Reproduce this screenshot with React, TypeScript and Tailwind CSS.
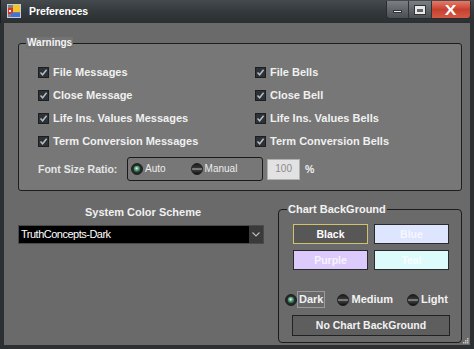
import React from "react";

const Check = () => (
  <svg width="11" height="11" viewBox="0 0 11 11" className="shrink-0">
    <rect x="0.5" y="0.5" width="10" height="10" fill="#2e3236" stroke="#1c1e20" />
    <path d="M2.5 5.6 L4.6 7.8 L8.6 2.8" fill="none" stroke="#b4bec6" strokeWidth="1.5" />
  </svg>
);

const Radio = ({ on }: { on?: boolean }) => (
  <svg width="12" height="12" viewBox="0 0 12 12" className="shrink-0">
    <defs>
      <linearGradient id="rOff" x1="0" y1="0" x2="0" y2="1">
        <stop offset="0" stopColor="#1c1c1c" />
        <stop offset="0.38" stopColor="#333" />
        <stop offset="0.5" stopColor="#a0a0a0" />
        <stop offset="0.62" stopColor="#3a3a3a" />
        <stop offset="1" stopColor="#111" />
      </linearGradient>
      <radialGradient id="rOn" cx="0.45" cy="0.4" r="0.6">
        <stop offset="0" stopColor="#e8fff4" />
        <stop offset="0.35" stopColor="#6fb896" />
        <stop offset="1" stopColor="#1d4a38" />
      </radialGradient>
    </defs>
    <circle cx="6" cy="6" r="5.5" fill={on ? "#262a28" : "url(#rOff)"} stroke="#151515" strokeWidth="0.8" />
    {on && <circle cx="6" cy="6" r="3.3" fill="url(#rOn)" />}
  </svg>
);

const CheckItem = ({ label }: { label: string }) => (
  <div className="flex items-center gap-[4px]">
    <Check />
    <span className="text-[11px] font-bold text-[#f0f0f0] leading-none">{label}</span>
  </div>
);

export default function App() {
  return (
    <div className="w-[474px] h-[349px] flex flex-col bg-[#6a6a6a] font-['Liberation_Sans',Arial,sans-serif] overflow-hidden">
      {/* Title bar */}
      <div className="h-[23px] shrink-0 flex items-start bg-gradient-to-b from-[#454a4e] via-[#34393c] to-[#2b2f32] border-l border-[#1a1d1f]">
        <svg width="14" height="14" viewBox="0 0 14 14" className="ml-[6px] mt-[4px] shrink-0">
          <rect x="0" y="0" width="14" height="14" fill="#c9ccd2" />
          <rect x="1" y="1" width="12" height="12" fill="#7d8088" />
          <rect x="6" y="1" width="7" height="7" fill="#f2c52a" />
          <rect x="1" y="4" width="5" height="6" fill="#d8332a" />
          <rect x="4" y="9" width="9" height="4" fill="#3f74d8" />
          <rect x="2" y="6" width="2" height="2" fill="#f5f5f5" />
        </svg>
        <span className="ml-[8px] mt-[5px] text-[10.5px] font-bold text-white leading-[12px] tracking-[-0.1px]">Preferences</span>
        <div className="ml-auto mr-[3px] mt-[1px] flex h-[18px] rounded-b-[4px] overflow-hidden border border-[#2a2d30] border-t-0">
          <div className="w-[22px] h-full flex items-center justify-center bg-gradient-to-b from-[#7a7f83] to-[#4a4f53] border-r border-[#2f3336]">
            <div className="w-[9px] h-[3px] bg-[#e8e8e8] border border-[#333] mt-[4px]" />
          </div>
          <div className="w-[23px] h-full flex items-center justify-center bg-gradient-to-b from-[#7a7f83] to-[#4a4f53] border-r border-[#2f3336]">
            <div className="w-[10px] h-[8px] border-[2px] border-t-[3px] border-[#e8e8e8] outline outline-1 outline-[#333]" />
          </div>
          <div className="w-[38px] h-full flex items-center justify-center bg-gradient-to-b from-[#e57a68] via-[#c6402f] to-[#d25a45]">
            <span className="text-[14px] font-bold text-white leading-none scale-x-125">X</span>
          </div>
        </div>
      </div>

      {/* Body */}
      <div className="relative flex-1 border-l-[4px] border-r-[4px] border-b-[4px] border-[#2c3033] pl-[14px] pt-[20px]">
        {/* Warnings group */}
        <div className="relative w-[444px] h-[148px] border border-[#1e1e1e] rounded-[3px] bg-[#777777] pt-[17px] pl-[19px]">
          <span className="absolute left-[7px] top-[-7px] px-[1px] bg-[#737373] text-[10px] font-bold text-[#f4f4f4] leading-[12px]">Warnings</span>
          <div className="grid grid-cols-[217px_1fr] auto-rows-[23px]">
            <CheckItem label="File Messages" />
            <CheckItem label="File Bells" />
            <CheckItem label="Close Message" />
            <CheckItem label="Close Bell" />
            <CheckItem label="Life Ins. Values Messages" />
            <CheckItem label="Life Ins. Values Bells" />
            <CheckItem label="Term Conversion Messages" />
            <CheckItem label="Term Conversion Bells" />
          </div>
          <div className="mt-[4px] flex items-center h-[24px]">
            <span className="w-[89px] text-[10.5px] font-bold text-[#e6e6e6] leading-none">Font Size Ratio:</span>
            <div className="w-[136px] h-[24px] border border-[#1a1a1a] rounded-[3px] flex items-center pl-[3px]">
              <Radio on />
              <span className="ml-[2px] text-[10px] text-[#ececec] leading-none">Auto</span>
              <div className="ml-[25px]">
                <Radio />
              </div>
              <span className="ml-[2px] text-[10px] text-[#ececec] leading-none">Manual</span>
            </div>
            <div className="ml-[4px] w-[33px] h-[21px] bg-[#e2e2e2] border border-[#b0b0b0] flex items-center justify-end pr-[7px]">
              <span className="text-[10px] text-[#8c8c8c] leading-none">100</span>
            </div>
            <span className="ml-[5px] text-[10.5px] font-bold text-[#f0f0f0] leading-none">%</span>
          </div>
        </div>

        {/* Bottom section */}
        <div className="mt-[14px] flex items-start">
          <div className="w-[246px] flex flex-col">
            <div className="h-[14px] flex items-center justify-center pl-[4px]">
              <span className="text-[11px] font-bold text-[#f0f0f0] leading-none">System Color Scheme</span>
            </div>
            <div className="mt-[6px] h-[19px] bg-black border border-[#4a4a4a] flex items-center">
              <span className="pl-[2px] text-[11px] text-white tracking-[-0.5px] leading-none">TruthConcepts-Dark</span>
              <div className="ml-auto w-[14px] h-full bg-[#3a3a3a] flex items-center justify-center">
                <svg width="8" height="5" viewBox="0 0 8 5">
                  <path d="M0.5 0.5 L4 4 L7.5 0.5" fill="none" stroke="#b8b8b8" strokeWidth="1.2" />
                </svg>
              </div>
            </div>
          </div>

          {/* Chart BackGround group */}
          <div className="relative mt-[4px] ml-[14px] w-[184px] h-[134px] border border-[#1c1c1c] rounded-[4px] pt-[14px]">
            <span className="absolute left-[8px] top-[-8px] px-[1px] bg-[#6a6a6a] text-[11px] font-bold text-[#f2f2f2] leading-[14px]">Chart BackGround</span>
            <div className="ml-[14px] grid grid-cols-[75px_75px] auto-rows-[20px] gap-[6px]">
              <div className="bg-[#575757] border border-[#cfc46a] flex items-center justify-center">
                <span className="text-[10.5px] font-bold text-white leading-none">Black</span>
              </div>
              <div className="bg-[#dde5ff] border border-[#2a2a2a] flex items-center justify-center">
                <span className="text-[10.5px] font-bold text-[#f6f8ff] leading-none">Blue</span>
              </div>
              <div className="bg-[#dccafc] border border-[#2a2a2a] flex items-center justify-center">
                <span className="text-[10.5px] font-bold text-[#f8f2ff] leading-none">Purple</span>
              </div>
              <div className="bg-[#ddfbfb] border border-[#2a2a2a] flex items-center justify-center">
                <span className="text-[10.5px] font-bold text-[#f6ffff] leading-none">Teal</span>
              </div>
            </div>
            <div className="mt-[21px] ml-[6px] h-[17px] flex items-center">
              <Radio on />
              <div className="h-[17px] px-[1px] border border-[#9a9a9a] flex items-center">
                <span className="text-[11px] font-bold text-[#f2f2f2] leading-none">Dark</span>
              </div>
              <div className="ml-[12px]">
                <Radio />
              </div>
              <span className="ml-[2px] text-[11px] font-bold text-[#f2f2f2] leading-none">Medium</span>
              <div className="ml-[14px]">
                <Radio />
              </div>
              <span className="ml-[2px] text-[11px] font-bold text-[#f2f2f2] leading-none">Light</span>
            </div>
            <div className="mt-[7px] ml-[13px] w-[158px] h-[21px] bg-[#5e5e5e] border border-[#222] flex items-center justify-center">
              <span className="text-[10.5px] font-bold text-[#f2f2f2] leading-none">No Chart BackGround</span>
            </div>
          </div>
        </div>

        {/* resize grip */}
        <svg width="7" height="7" viewBox="0 0 7 7" className="absolute right-[1px] bottom-[1px]">
          <rect x="5" y="1" width="1.5" height="1.5" fill="#c8c8c8" />
          <rect x="3" y="3" width="1.5" height="1.5" fill="#c8c8c8" />
          <rect x="5" y="3" width="1.5" height="1.5" fill="#c8c8c8" />
          <rect x="1" y="5" width="1.5" height="1.5" fill="#c8c8c8" />
          <rect x="3" y="5" width="1.5" height="1.5" fill="#c8c8c8" />
          <rect x="5" y="5" width="1.5" height="1.5" fill="#c8c8c8" />
        </svg>
      </div>
    </div>
  );
}
